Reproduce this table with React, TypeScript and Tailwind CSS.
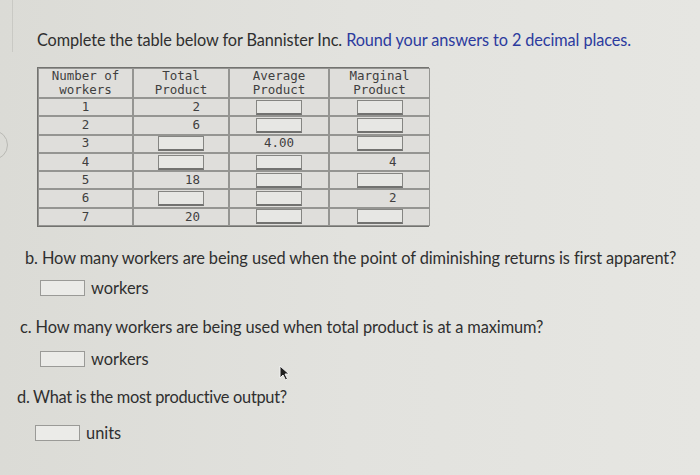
export default function App() {
  const rows: [string, string | null, string | null, string | null][] = [
    ["1", "2", null, null],
    ["2", "6", null, null],
    ["3", null, "4.00", null],
    ["4", null, null, "4"],
    ["5", "18", null, null],
    ["6", null, null, "2"],
    ["7", "20", null, null],
  ];

  const cell = "h-[18.3px] border border-[#959592] bg-[#dfdedb] flex items-center justify-center";

  return (
    <div className="relative w-[700px] h-[475px] overflow-hidden bg-linear-to-r from-[#dbdbd6] via-[#e2e2de] to-[#e6e6e2] text-[#2f2f2f] font-['Lato','Open_Sans',sans-serif]">
      {/* edge of the neighbouring panel */}
      <div className="absolute left-[12px] top-0 h-[52px] w-px bg-[#c9c9c4]" />
      <div className="absolute left-[-22px] top-[130px] h-[30px] w-[30px] rounded-full border border-[#b9b9b4]" />

      <div className="flex flex-col pl-[37px] pt-[30px]">
        <p className="text-[16.3px] leading-[20px] tracking-[-0.1px]">
          Complete the table below for Bannister Inc.{" "}
          <span className="text-[#2c3b9e]">Round your answers to 2 decimal places.</span>
        </p>

        <div className="mt-[17px] w-[392px] border border-[#737370] font-['DejaVu_Sans_Mono',monospace] text-[12.5px] text-[#3f3f3f]">
          <div className="grid grid-cols-[95px_96px_100px_101px]">
            {[["Number of", "workers"], ["Total", "Product"], ["Average", "Product"], ["Marginal", "Product"]].map((h) => (
              <div key={h[0]} className="h-[30px] border border-[#959592] bg-[#dfdedb] flex flex-col items-center justify-center leading-[14px]">
                <span>{h[0]}</span>
                <span>{h[1]}</span>
              </div>
            ))}
            {rows.map(([n, tp, ap, mp]) => (
              <Row key={n} n={n} tp={tp} ap={ap} mp={mp} cell={cell} />
            ))}
          </div>
        </div>

        <p className="mt-[21px] -ml-[12px] text-[16.4px] leading-[20px] tracking-[-0.1px]">
          b. How many workers are being used when the point of diminishing returns is first apparent?
        </p>
        <Answer label="workers" className="mt-[10px] ml-[3px]" />

        <p className="mt-[19px] -ml-[17px] text-[16.4px] leading-[20px] tracking-[-0.1px]">
          c. How many workers are being used when total product is at a maximum?
        </p>
        <Answer label="workers" className="mt-[12px] ml-[3px]" />

        <p className="mt-[18px] -ml-[20px] text-[16.4px] leading-[20px] tracking-[-0.3px]">
          d. What is the most productive output?
        </p>
        <Answer label="units" className="mt-[16px] -ml-[2px]" />
      </div>

      {/* mouse pointer */}
      <svg className="absolute left-[279px] top-[365px]" width="12" height="16" viewBox="0 0 12 16">
        <path d="M1 1 L1 13 L4 10 L6.5 15 L8.5 14 L6 9 L10 9 Z" fill="#1f1f1f" stroke="#f2f2f2" strokeWidth="1" />
      </svg>
    </div>
  );
}

function Box({ className = "" }: { className?: string }) {
  return (
    <div
      className={`h-[15px] w-[46px] border border-[#858582] border-b-2 border-b-[#727270] bg-[#e7e7e4] ${className}`}
    />
  );
}

function Row({
  n,
  tp,
  ap,
  mp,
  cell,
}: {
  n: string;
  tp: string | null;
  ap: string | null;
  mp: string | null;
  cell: string;
}) {
  return (
    <>
      <div className={cell}>{n}</div>
      <div className={cell}>
        {tp ? <span className="w-[46px] pr-[4px] text-right">{tp}</span> : <Box />}
      </div>
      <div className={cell}>
        {ap ? <span className="w-[46px] text-center">{ap}</span> : <Box />}
      </div>
      <div className={cell}>
        {mp ? <span className="w-[46px] pr-[6px] text-right">{mp}</span> : <Box />}
      </div>
    </>
  );
}

function Answer({ label, className = "" }: { label: string; className?: string }) {
  return (
    <div className={`flex items-center gap-[6px] ${className}`}>
      <div className="h-[16px] w-[45px] border border-[#9a9a97] bg-[#ebebe8]" />
      <span className="text-[16.4px] leading-[20px]">{label}</span>
    </div>
  );
}
